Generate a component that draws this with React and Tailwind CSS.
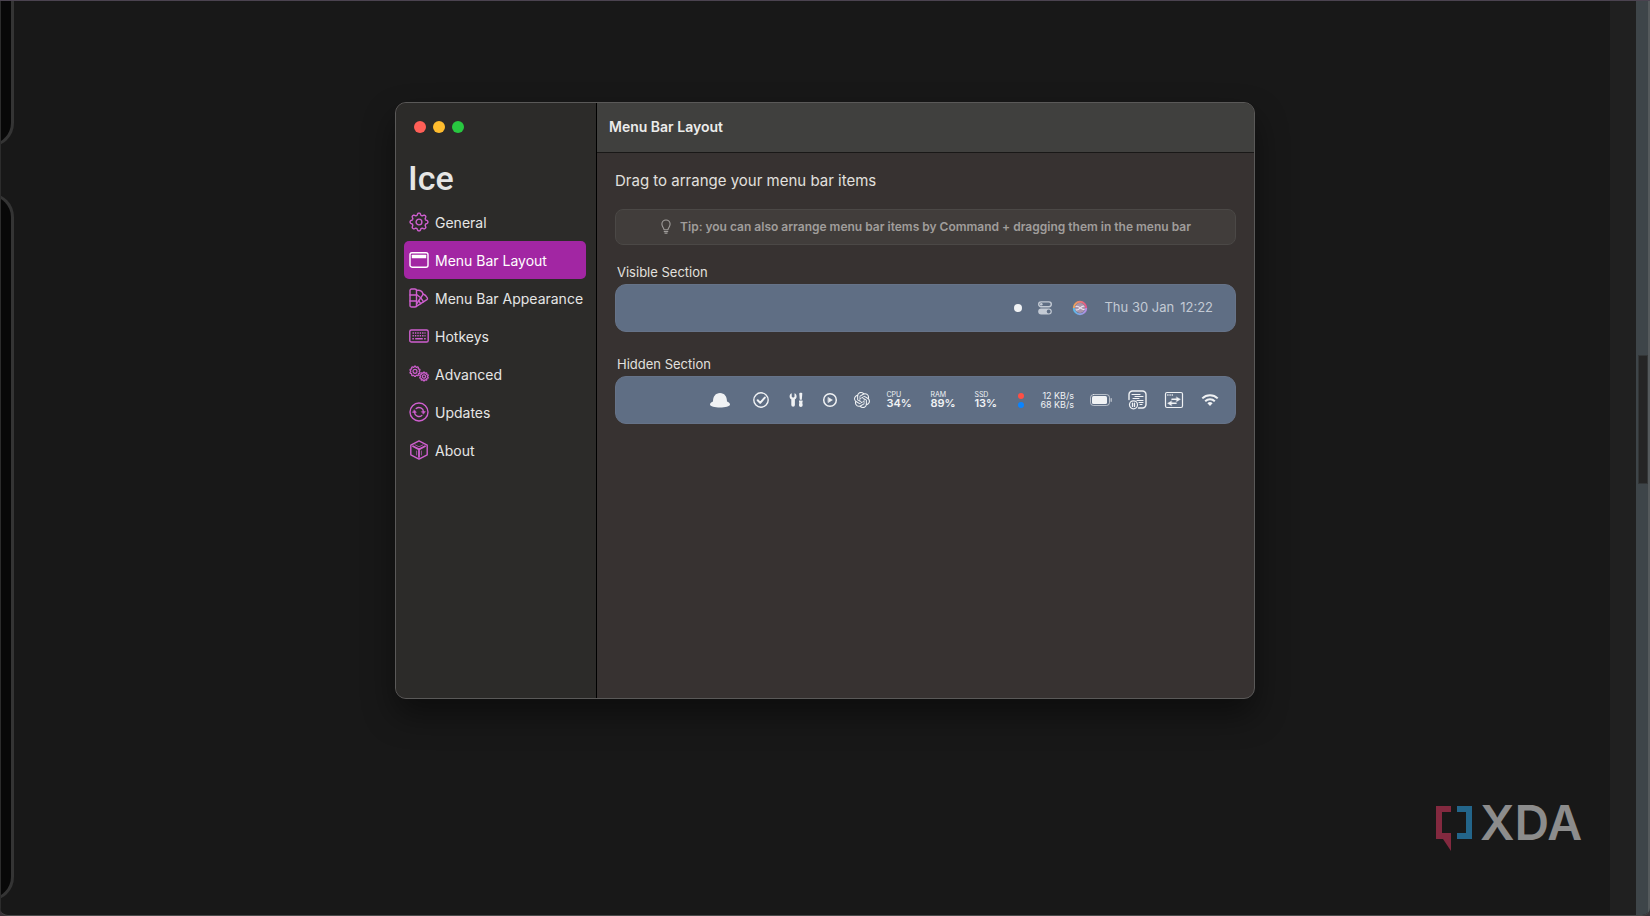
import React, { useState } from 'react';
import clsx from 'clsx';
import { SiOpenai } from 'react-icons/si';

// Scalloped outline used by the gear icons
const gearPath = (cx, cy, r, depth, teeth) => {
    const points = [];
    for (let i = 0; i < 160; i++) {
        const a = (i / 160) * Math.PI * 2;
        const wave = Math.tanh(1.6 * Math.cos(teeth * a)) / Math.tanh(1.6);
        const d = r + depth * wave;
        points.push(`${(cx + d * Math.sin(a)).toFixed(2)} ${(cy - d * Math.cos(a)).toFixed(2)}`);
    }
    return `M${points.join('L')}Z`;
};

const Icon = ({ children, className = "w-5 h-5", box = "0 0 20 20" }) => (
    <svg viewBox={box} className={clsx("shrink-0", className)} fill="none" stroke="currentColor" strokeWidth="1.4" strokeLinecap="round" strokeLinejoin="round" aria-hidden="true">
        {children}
    </svg>
);

const GeneralIcon = () => (
    <Icon>
        <path d={gearPath(10, 10, 7.9, 1.0, 8)} />
        <circle cx="10" cy="10" r="2.9" />
    </Icon>
);

const LayoutIcon = () => (
    <Icon>
        <rect x="1" y="2.8" width="18" height="14.4" rx="2" />
        <rect x="2.8" y="4.8" width="14.4" height="3.4" rx="0.5" fill="currentColor" stroke="none" />
    </Icon>
);

const AppearanceIcon = () => (
    <Icon>
        <rect x="1" y="1" width="6.5" height="18" rx="1.6" />
        <path d="M1 7h6.5M1 13h6.5" />
        <path d="M7.5 2.2h1.8c2.2 0 3.8 1.2 4.6 3.3.2.6.1 1.1-.3 1.6L7.5 16" />
        <path d="M14 6c1.800.6 3.300 2 4.400 4 .3.7.1 1.300-.5 1.700L7 18.600" />
        <path d="M7.5 6.5l4.3 3.3M9.5 12.5l2.3 3.2M11.8 9.8l2.8 4" />
    </Icon>
);

const HotkeysIcon = () => (
    <Icon>
        <rect x="0.8" y="4" width="18.4" height="12" rx="1.6" />
        <path d="M3.5 7h13M3.5 9.7h13" strokeWidth="1.5" strokeDasharray="1.4 1" strokeLinecap="butt" />
        <path d="M3.3 12.8h1.6M6.2 12.8h7.6M15.1 12.8h1.6" strokeWidth="1.5" strokeLinecap="butt" />
    </Icon>
);

const AdvancedIcon = () => (
    <Icon>
        <g strokeWidth="1.2">
            <path d={gearPath(6, 7.3, 4.7, 0.5, 10)} />
            <circle cx="6" cy="7.3" r="2" />
            <path d={gearPath(15, 12.5, 3.9, 0.5, 10)} />
            <circle cx="15" cy="12.5" r="1.6" />
        </g>
    </Icon>
);

const UpdatesIcon = () => (
    <Icon>
        <circle cx="10" cy="10" r="9" />
        <path d="M7.2 6.5a4.5 4.5 0 0 1 7.3 3.3M12.8 13.5a4.5 4.5 0 0 1-7.3-3.3" />
        <path d="M12.6 9.6h3.8l-1.9 2.4zM3.6 10.4h3.8L5.5 8z" fill="currentColor" strokeWidth="0.5" />
    </Icon>
);

const AboutIcon = () => (
    <Icon>
        <path d="M10 .9l8.2 4.3v9.6L10 19.1l-8.2-4.3V5.2z" />
        <path d="M4 6.3l6 3.1 6-3.1M10 9.4v7.6" strokeWidth="1.8" />
        <path d="M6 4.8l4 2 4-2M7.6 11v4M12.4 11v4" strokeWidth="0.7" />
    </Icon>
);

const BulbIcon = () => (
    <Icon className="w-3 h-4" box="0 0 12 16">
        <g strokeWidth="1.1">
            <path d="M4 10.7C3.8 8.8 1.9 7.8 1.9 5.1a4.1 4.1 0 0 1 8.2 0c0 2.7-1.9 3.7-2.1 5.6z" />
            <path d="M4.2 12.6h3.6M5 14.3h2" />
        </g>
    </Icon>
);

const HatIcon = () => (
    <Icon className="w-7 h-5" box="0 0 28 20">
        <path d="M7 11.5C7 6.5 9.5 3 14 3s7 3.5 7 8.5c1.5.5 3 1.5 3 3 0 2-5 3-10 3s-10-1-10-3c0-1.5 1.5-2.5 3-3z" fill="currentColor" stroke="none" />
    </Icon>
);

const CheckIcon = () => (
    <Icon className="w-[22px] h-5" box="0 0 22 20">
        <circle cx="11" cy="10" r="7.2" />
        <path d="M7.7 10.3l2.5 2.6 4.6-5.3" strokeWidth="2" />
    </Icon>
);

const ToolsIcon = () => (
    <Icon className="w-[18px] h-5" box="0 0 18 20">
        <g fill="currentColor" stroke="none">
            <path d="M3.7 3.3v3.5l1.4.9 1.4-.9V3.3C8 4 8.600 5.100 8.600 6.400c0 1.300-.8 2.300-1.700 2.900V15a1.800 1.800 0 0 1-3.600 0V9.300c-.9-.6-1.700-1.600-1.700-2.900 0-1.300.6-2.400 2.100-3.100z" />
            <path d="M11.3 3.7c0-.6.5-.9 1.500-.9s1.500.3 1.500.9l-.5 6h-2z" />
            <path d="M11 10.5h3.600v1.700l-.5.8.5.8v1.500c0 1-.7 1.700-1.800 1.700S11 16.300 11 15.300v-1.500l.5-.8-.5-.8z" />
        </g>
    </Icon>
);

const PlayIcon = () => (
    <Icon className="w-4 h-5" box="0 0 16 20">
        <circle cx="8" cy="10" r="6.3" strokeWidth="1.5" />
        <path d="M6.3 7.6l4.1 2.4-4.1 2.4z" fill="currentColor" strokeWidth="0.6" />
    </Icon>
);

const BatteryIcon = () => (
    <Icon className="w-[22px] h-5" box="1 0 22 20">
        <rect x="1.5" y="4.5" width="19" height="11" rx="3" strokeWidth="1" opacity="0.6" />
        <rect x="3" y="6" width="15" height="8" rx="1.5" fill="currentColor" stroke="none" />
        <path d="M22.2 8.7v2.6" opacity="0.6" />
    </Icon>
);

const PausedAppIcon = () => (
    <Icon className="w-[19px] h-5" box="0 0 19 20">
        <path d="M1 9.5v-5A3.5 3.5 0 0 1 4.5 1h10A3.5 3.5 0 0 1 18 4.5v10a3.5 3.5 0 0 1-3.500 3.500H10.500" />
        <path d="M4 4.500h8M7 6.500h8M5 8.500h6M9 10.500h6M11 12.500h4M12 14.500h2" strokeWidth="1.2" />
        <circle cx="5.5" cy="14.8" r="4" strokeWidth="1.2" />
        <path d="M4.500 13.200v3.200M6.500 13.200v3.200" strokeWidth="1.3" />
    </Icon>
);

const SwapWindowIcon = () => (
    <Icon className="w-[22px] h-5" box="0 0 22 20">
        <rect x="2.5" y="2.5" width="17" height="15" rx="1.5" strokeWidth="1.2" />
        <path d="M4.8 5h.2M7 5h.2M9.2 5h.2" strokeWidth="1.4" />
        <path d="M9 9.3h5M8 13.3h5" strokeWidth="1.6" />
        <path d="M13.5 6.9L17.5 9.3 13.5 11.7zM8.5 10.9l-4 2.4 4 2.4z" fill="currentColor" strokeWidth="0.3" />
    </Icon>
);

const WifiIcon = () => (
    <Icon className="w-[18px] h-5" box="0 0 18 20">
        <g strokeWidth="2" strokeLinecap="butt">
            <path d="M1.3 8.4a11 11 0 0 1 15.4 0" />
            <path d="M4.2 11.3a6.9 6.9 0 0 1 9.6 0" />
        </g>
        <path d="M9 16l-2.6-2.7a3.8 3.8 0 0 1 5.2 0z" fill="currentColor" stroke="none" />
    </Icon>
);

const ControlCenterIcon = () => (
    <Icon className="w-[14px] h-[14px]" box="0 0 14 14">
        <rect x="0.7" y="0.9" width="12.6" height="4.8" rx="2.4" />
        <circle cx="3.3" cy="3.3" r="1.3" fill="currentColor" stroke="none" />
        <rect x="0.2" y="7.5" width="13.6" height="6" rx="3" fill="currentColor" stroke="none" />
        <circle cx="10.7" cy="10.5" r="1.9" fill="#5f6e84" stroke="none" />
    </Icon>
);

const SiriIcon = () => (
    <Icon className="w-4 h-4" box="0 0 16 16">
        <defs>
            <linearGradient id="siri-warm" x1="0" y1="0" x2="1" y2="0">
                <stop offset="0" stopColor="#eda55c" />
                <stop offset="1" stopColor="#e2568c" />
            </linearGradient>
            <linearGradient id="siri-cool" x1="0" y1="0" x2="1" y2="0">
                <stop offset="0" stopColor="#58b9e8" />
                <stop offset="1" stopColor="#b98be0" />
            </linearGradient>
        </defs>
        <circle cx="8" cy="8" r="5" fill="#a995ac" stroke="none" />
        <path d="M1.8 8a6.2 6.2 0 0 1 12.4 0" stroke="url(#siri-warm)" strokeWidth="2" strokeLinecap="butt" />
        <path d="M1.8 8a6.2 6.2 0 0 0 12.4 0" stroke="url(#siri-cool)" strokeWidth="2" strokeLinecap="butt" />
        <path d="M4 6.5C7 4.5 9.5 11 12.2 9.3M4 9.8C7 11.5 9 5 12 6.3" stroke="#ece2ee" strokeWidth="1.1" />
    </Icon>
);

const NAV_ITEMS = [
    { label: "General", icon: GeneralIcon },
    { label: "Menu Bar Layout", icon: LayoutIcon },
    { label: "Menu Bar Appearance", icon: AppearanceIcon },
    { label: "Hotkeys", icon: HotkeysIcon },
    { label: "Advanced", icon: AdvancedIcon },
    { label: "Updates", icon: UpdatesIcon },
    { label: "About", icon: AboutIcon },
];

const STATS = [
    { name: "CPU", value: "34%" },
    { name: "RAM", value: "89%" },
    { name: "SSD", value: "13%" },
];

const Sidebar = ({ active, onSelect }) => (
    <aside className="w-[201px] shrink-0 flex flex-col bg-[#2c2b29] border-r border-black pl-2 pr-[10px]">
        <div className="flex gap-[7px] pt-[18px] pl-[10px]">
            <button aria-label="Close" className="w-3 h-3 rounded-full bg-[#ff5f57]"></button>
            <button aria-label="Minimize" className="w-3 h-3 rounded-full bg-[#febc2e]"></button>
            <button aria-label="Zoom" className="w-3 h-3 rounded-full bg-[#28c840]"></button>
        </div>
        <h1 className="mt-[27px] mb-[7px] pl-1 font-[Roboto] font-medium text-[34px] leading-9 text-[#e6e6e5]">Ice</h1>
        <nav>
            {NAV_ITEMS.map(({ label, icon: ItemIcon }) => (
                <button
                    key={label}
                    onClick={() => onSelect(label)}
                    className={clsx(
                        "w-full h-[38px] flex items-center gap-[6px] px-[5px] rounded-[5px] text-[14px] whitespace-nowrap",
                        label === active ? "bg-[#a226a3] text-white" : "text-[#e6e6e5]"
                    )}
                >
                    <span className={label === active ? "text-white" : "text-[#cf5fcf]"}><ItemIcon /></span>
                    {label}
                </button>
            ))}
        </nav>
    </aside>
);

const Section = ({ title, children }) => (
    <section>
        <h3 className="pl-[2px] text-[13px] leading-6 text-[#e2e0df]">{title}</h3>
        <div className="h-12 flex items-center justify-end rounded-[11px] bg-[#5f6e84] border border-[#667388]">
            {children}
        </div>
    </section>
);

const SettingsWindow = () => {
    const [active, setActive] = useState("Menu Bar Layout");

    return (
        <div className="w-full max-w-[860px] min-h-[597px] flex rounded-[11px] overflow-hidden border border-[#5a5958] bg-[#373231] shadow-[0_16px_32px_rgba(0,0,0,0.45)]">
            <Sidebar active={active} onSelect={setActive} />
            <main className="flex-1 min-w-0">
                <header className="h-[50px] px-3 bg-[#40403e] border-b border-[#191817]">
                    <h2 className="text-[14px] leading-[47px] font-semibold text-[#ececeb]">{active}</h2>
                </header>
                <div className="px-[18px] pt-4">
                    <p className="text-[15px] leading-6 text-[#e2e0df]">Drag to arrange your menu bar items</p>
                    <div className="mt-4 h-9 flex items-center justify-center gap-2 rounded-lg bg-[#413d3b] border border-[#4b4846] text-[12px] font-semibold text-[#a09d9b]">
                        <BulbIcon />
                        Tip: you can also arrange menu bar items by Command + dragging them in the menu bar
                    </div>

                    <div className="mt-[15px] flex flex-col gap-5">
                        <Section title="Visible Section">
                            <div className="flex items-center gap-4 pr-[22px] text-[13px] text-[#c3cad4]">
                                <span className="w-2 h-2 rounded-full bg-[#f0f2f4]"></span>
                                <ControlCenterIcon />
                                <span className="pl-1"><SiriIcon /></span>
                                <time className="flex gap-[6px]">
                                    <span>Thu 30 Jan</span>
                                    <span>12:22</span>
                                </time>
                            </div>
                        </Section>

                        <Section title="Hidden Section">
                            <div className="flex items-center gap-4 pr-4 text-[#f0f2f4]">
                                <HatIcon />
                                <CheckIcon />
                                <ToolsIcon />
                                <PlayIcon />
                                <SiOpenai className="w-4 h-4" />
                                {STATS.map(({ name, value }) => (
                                    <div key={name} className="w-7">
                                        <div className="text-[7px] leading-[7px]">{name}</div>
                                        <div className="text-[11px] leading-[11px] font-semibold">{value}</div>
                                    </div>
                                ))}
                                <div className="flex flex-col gap-[3px]">
                                    <span className="w-[6px] h-[6px] rounded-full bg-[#ff4f44]"></span>
                                    <span className="w-[6px] h-[6px] rounded-full bg-[#0a84ff]"></span>
                                </div>
                                <div className="text-right text-[9px] leading-[9px] whitespace-nowrap">
                                    <div>12 KB/s</div>
                                    <div>68 KB/s</div>
                                </div>
                                <BatteryIcon />
                                <PausedAppIcon />
                                <SwapWindowIcon />
                                <WifiIcon />
                            </div>
                        </Section>
                    </div>
                </div>
            </main>
        </div>
    );
};

const Watermark = () => (
    <div className="flex items-start gap-2 text-[#8c8c8c]">
        <svg viewBox="0 0 36 45" className="w-9 h-[45px]" aria-hidden="true">
            <path d="M0 0h15v6H6v21h9v18L7 33H0z" fill="#83293f" />
            <path d="M36 0H21v6h9v21h-9v6h15z" fill="#23658a" />
        </svg>
        <span className="w-[108px] font-semibold text-[48px] leading-[34px]">XDA</span>
    </div>
);

export default function App() {
    return (
        <div className="bg-[#3a3439] font-[Inter,sans-serif]">
            <div className="min-h-screen flex bg-[#181818] border-t border-[#4b4350] border-b border-b-[#4a4a4a] rounded-b-lg overflow-hidden">
                {/* Edges of the panels behind, cut off by the left side of the screen */}
                <div className="w-10 shrink-0 flex flex-col overflow-hidden border-l border-[#2c2c2c]">
                    <div className="w-[25px] h-[146px] -ml-3 bg-[#080808] border-r-3 border-b-3 border-[#343434] rounded-br-[24px]"></div>
                    <div className="w-[25px] flex-1 -ml-3 mt-[46px] mb-[14px] bg-[#080808] border-y-3 border-r-3 border-[#343434] rounded-r-[24px]"></div>
                </div>

                <div className="flex-1 min-w-0 flex flex-col items-center pt-[101px]">
                    <SettingsWindow />
                    <div className="mt-auto self-end pt-8 pr-[22px] pb-16">
                        <Watermark />
                    </div>
                </div>

                <div className="w-[26px] shrink-0 bg-[#202020]"></div>
                <div className="w-[14px] shrink-0 bg-[#3e4549] border-r-2 border-[#555a5c] pt-[354px] pl-[2px]">
                    <div className="h-[129px] bg-[#252525] border border-[#333637]"></div>
                </div>
            </div>
        </div>
    );
}
